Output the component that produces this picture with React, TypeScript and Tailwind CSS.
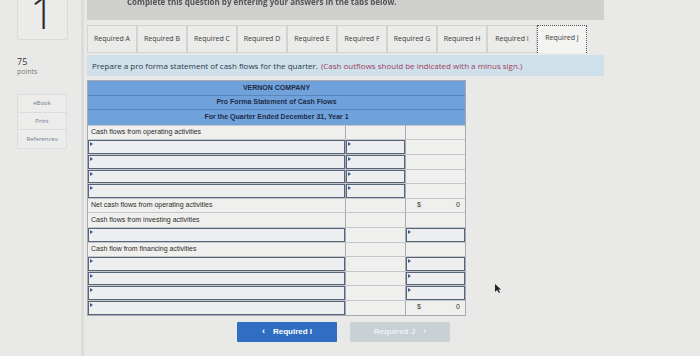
import React from "react";

const tabs = ["A", "B", "C", "D", "E", "F", "G", "H", "I", "J"];

type Cell = { kind: "text"; text: string } | { kind: "input" } | { kind: "empty" } | { kind: "total" };

type Row = [Cell, Cell, Cell];

const E: Cell = { kind: "empty" };
const I: Cell = { kind: "input" };
const T: Cell = { kind: "total" };
const L = (text: string): Cell => ({ kind: "text", text });

const rows: Row[] = [
  [L("Cash flows from operating activities"), E, E],
  [I, I, E],
  [I, I, E],
  [I, I, E],
  [I, I, E],
  [L("Net cash flows from operating activities"), E, T],
  [L("Cash flows from investing activities"), E, E],
  [I, E, I],
  [L("Cash flow from financing activities"), E, E],
  [I, E, I],
  [I, E, I],
  [I, E, I],
  [I, E, T],
];

function InputCell() {
  return (
    <div className="relative h-full w-full border border-[#56657c] bg-[#eceeef]">
      <span className="absolute left-[1px] top-[1px] h-0 w-0 border-y-[2px] border-l-[3px] border-y-transparent border-l-[#3d5a8c]" />
    </div>
  );
}

function TableCell({ cell, first }: { cell: Cell; first?: boolean }) {
  if (cell.kind === "input") return <InputCell />;
  if (cell.kind === "total")
    return (
      <div className="flex h-full items-center justify-between pl-[11px] pr-[5px] text-[7px] text-[#333]">
        <span>$</span>
        <span>0</span>
      </div>
    );
  if (cell.kind === "text")
    return (
      <div className={`flex h-full items-center text-[7px] text-[#2b2b2b] ${first ? "pl-[3px]" : ""}`}>
        {cell.text}
      </div>
    );
  return <div className="h-full" />;
}

export default function App() {
  return (
    <div className="relative flex h-[356px] w-[700px] overflow-hidden bg-[#e9e9e7] font-['Open_Sans',sans-serif]">
      {/* left column */}
      <div className="flex w-[84px] flex-col border-r-[3px] border-[#dcdcda] pl-[17px]">
        <div className="flex h-[40px] w-[51px] items-end justify-center overflow-hidden rounded-b-[3px] border border-t-0 border-[#dadad8] bg-[#ebebe9]">
          <span className="mb-[5px] text-[44px] font-light leading-none text-[#2b2b2b]">1</span>
        </div>
        <div className="mt-[16px] text-[9px] leading-[11px] text-[#3a3a3a]">75</div>
        <div className="text-[7px] leading-[9px] text-[#7a7a7a]">points</div>
        <div className="mt-[18px] flex w-[50px] flex-col rounded-[2px] border border-[#dcdcdc] bg-[#ececea] text-[6px] text-[#6c7c94]">
          <div className="flex h-[18px] items-center justify-center border-b border-[#dcdcdc]">eBook</div>
          <div className="flex h-[17px] items-center justify-center border-b border-[#dcdcdc]">Print</div>
          <div className="flex h-[18px] items-center justify-center">References</div>
        </div>
      </div>

      {/* main column */}
      <div className="flex w-[520px] flex-col pl-[3px]">
        <div className="h-[20px] overflow-hidden bg-[#cfcfcd] pl-[40px]">
          <div className="-mt-[4px] text-[8px] font-bold text-[#555] blur-[0.6px]">
            Complete this question by entering your answers in the tabs below.
          </div>
        </div>

        <div className="mt-[5px] flex h-[28px] w-[505px]">
          {tabs.map((t) => (
            <div
              key={t}
              className={
                t === "J"
                  ? "flex w-[50px] items-center justify-center border border-dotted border-[#555] border-b-0 bg-[#f3f3f1] pb-[3px] text-[7px] text-[#3a3a3a]"
                  : "flex w-[50px] items-center justify-center border border-[#d2d2d0] bg-[#ebebe9] pt-[1px] text-[7px] text-[#3a3a3a]"
              }
            >
              Required {t}
            </div>
          ))}
        </div>

        <div className="mt-[2px] flex h-[21px] items-center bg-[#cfe0ea] pl-[5px] text-[8px] text-[#2c3a48]">
          <span>Prepare a pro forma statement of cash flows for the quarter.</span>
          <span className="ml-[3px] text-[#a04060]">(Cash outflows should be indicated with a minus sign.)</span>
        </div>

        {/* table */}
        <div className="mt-[4px] w-[379px] border border-[#a6aab0] bg-[#efefed] font-['Liberation_Sans',sans-serif]">
          <div className="bg-[#6fa2db] text-center text-[7px] font-bold text-[#1f2b47]">
            <div className="flex h-[14.6px] items-center justify-center border-b border-[#5a86bd]">VERNON COMPANY</div>
            <div className="flex h-[14.6px] items-center justify-center border-b border-[#5a86bd]">Pro Forma Statement of Cash Flows</div>
            <div className="flex h-[14.6px] items-center justify-center">For the Quarter Ended December 31, Year 1</div>
          </div>
          {rows.map((r, i) => (
            <div key={i} className="grid h-[14.6px] grid-cols-[258px_60px_1fr] border-t border-[#c4c6c8]">
              <div className="border-r border-[#a6aab0]">
                <TableCell cell={r[0]} first />
              </div>
              <div className="border-r border-[#a6aab0]">
                <TableCell cell={r[1]} />
              </div>
              <div>
                <TableCell cell={r[2]} />
              </div>
            </div>
          ))}
        </div>

        <div className="mt-[6px] flex w-[517px] justify-center gap-[13px] pr-[4px] font-['Liberation_Sans',sans-serif]">
          <div className="flex h-[20px] w-[100px] items-center justify-center gap-[8px] rounded-[1px] bg-[#2f6ec2] text-[8px] font-bold text-white">
            <span className="text-[9px]">‹</span>
            <span>Required I</span>
          </div>
          <div className="flex h-[20px] w-[100px] items-center justify-center gap-[8px] rounded-[1px] bg-[#c9d0d6] text-[8px] font-bold text-[#eef1f4]">
            <span>Required J</span>
            <span className="text-[9px]">›</span>
          </div>
        </div>
      </div>

      {/* mouse cursor */}
      <svg className="absolute left-[494px] top-[283px]" width="8" height="11" viewBox="0 0 8 11">
        <path d="M1 1 L1 9 L3 7 L5 10 L6 9.5 L4.5 6.5 L7 6.5 Z" fill="#222" />
      </svg>
    </div>
  );
}
